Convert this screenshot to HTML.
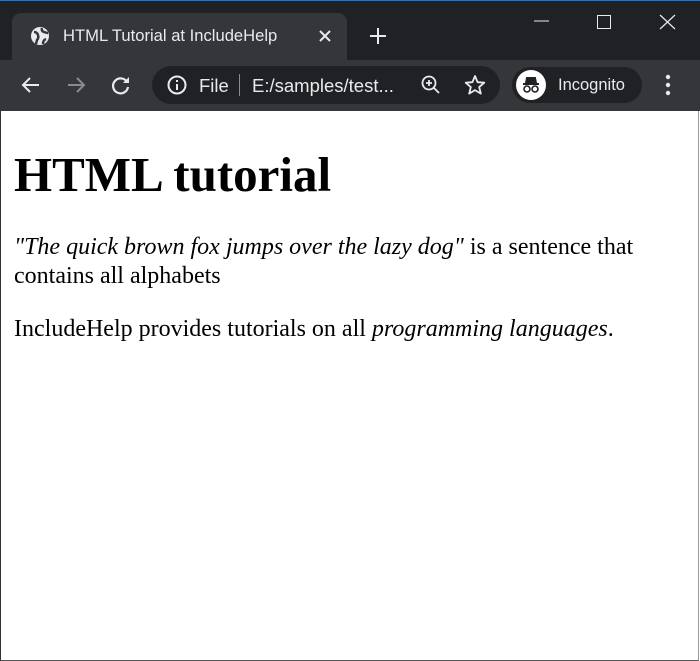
<!DOCTYPE html>
<html><head><style>
body{margin:0;width:700px;height:661px;overflow:hidden;background:#fff;font-family:"Liberation Sans",sans-serif;position:relative}
.top{position:absolute;left:0;top:0;width:700px;height:60px;background:#202124;border-top:1px solid #3a6fa8;box-sizing:border-box}
.tab{position:absolute;left:12px;top:13px;width:335px;height:48px;background:#35363a;border-radius:9px 9px 0 0}
.tb{position:absolute;left:0;top:60px;width:700px;height:51px;background:#35363a}
.omni{position:absolute;left:152px;top:66px;width:348px;height:38px;background:#202124;border-radius:19px}
.inc{position:absolute;left:512px;top:67px;width:130px;height:36px;background:#202124;border-radius:18px}
.t{position:absolute;color:#e8eaed;font-size:16px;white-space:nowrap}
.content{position:absolute;left:0;top:111px;width:699px;height:550px;border-left:1px solid #333;border-right:1px solid #999;border-bottom:1px solid #555;box-sizing:border-box;font-family:"Liberation Serif",serif;color:#000}
h1{position:absolute;left:13px;top:35px;margin:0;font-size:49px;font-weight:bold}
p{position:absolute;left:13px;margin:0;font-size:24px;line-height:29px;width:645px}
svg{position:absolute}
</style></head><body>
<div class="top"></div>
<div class="tab"></div>
<svg style="left:30px;top:26px" width="20" height="20" viewBox="0 0 20 20"><circle cx="10" cy="10" r="9" fill="#e8eaed"/><path d="M4 6q3 0 4 3t-1 5l-1 4M12 2q-1 3 2 4t4 1M13 18q0-4 3-5" stroke="#35363a" stroke-width="2.5" fill="none"/></svg>
<div class="t" style="left:63px;top:26px;font-size:16.6px">HTML Tutorial at IncludeHelp</div>
<svg style="left:318px;top:29px" width="14" height="14"><path d="M2 2L12 12M12 2L2 12" stroke="#e8eaed" stroke-width="2"/></svg>
<svg style="left:369px;top:27px" width="18" height="18"><path d="M9 1V17M1 9H17" stroke="#e8eaed" stroke-width="2"/></svg>
<svg style="left:532px;top:14px" width="150" height="16"><path d="M2 7H17" stroke="#e8eaed"/><rect x="65.5" y="1.5" width="13" height="13" fill="none" stroke="#e8eaed"/><path d="M128 1L143 15M143 1L128 15" stroke="#e8eaed" stroke-width="1.2"/></svg>
<div class="tb"></div>
<svg style="left:20px;top:75px" width="22" height="20"><path d="M19 10H3M10 3L3 10L10 17" stroke="#e8eaed" stroke-width="2" fill="none"/></svg>
<svg style="left:65px;top:75px" width="22" height="20"><path d="M3 10H19M12 3L19 10L12 17" stroke="#8a8b8e" stroke-width="2" fill="none"/></svg>
<svg style="left:110px;top:74px" width="22" height="22"><path d="M17 8A7.5 7.5 0 1 0 18 13" stroke="#e8eaed" stroke-width="2.2" fill="none"/><path d="M19 3V9H13Z" fill="#e8eaed"/></svg>
<div class="omni"></div>
<svg style="left:167px;top:75px" width="20" height="20"><circle cx="10" cy="10" r="8.5" stroke="#e8eaed" stroke-width="2" fill="none"/><path d="M10 9V15M10 5V7" stroke="#e8eaed" stroke-width="2"/></svg>
<div class="t" style="left:199px;top:75px;font-size:18.5px">File</div>
<div style="position:absolute;left:239px;top:74px;width:1px;height:22px;background:#8a8b8e"></div>
<div class="t" style="left:252px;top:75px;font-size:18.5px">E:/samples/test...</div>
<svg style="left:421px;top:75px" width="20" height="20"><circle cx="8" cy="8" r="6.5" stroke="#e8eaed" stroke-width="1.8" fill="none"/><path d="M12.5 12.5L18 18M8 5V11M5 8H11" stroke="#e8eaed" stroke-width="1.8"/></svg>
<svg style="left:464px;top:74px" width="22" height="22"><path d="M11 2L13.6 8.2 20.3 8.7 15.2 13.1 16.8 19.6 11 16.1 5.2 19.6 6.8 13.1 1.7 8.7 8.4 8.2Z" stroke="#e8eaed" stroke-width="1.8" fill="none" stroke-linejoin="round"/></svg>
<div class="inc"></div>
<svg style="left:516px;top:70px" width="30" height="30"><circle cx="15" cy="15" r="15" fill="#fff"/><path d="M10 13L11 8H19L20 13ZM7 14H23" stroke="#202124" stroke-width="2" fill="#202124"/><circle cx="11" cy="19" r="3" stroke="#202124" stroke-width="1.6" fill="none"/><circle cx="19" cy="19" r="3" stroke="#202124" stroke-width="1.6" fill="none"/></svg>
<div class="t" style="left:558px;top:76px;font-size:16.5px">Incognito</div>
<svg style="left:664px;top:74px" width="8" height="22"><circle cx="4" cy="3" r="2.2" fill="#e8eaed"/><circle cx="4" cy="11" r="2.2" fill="#e8eaed"/><circle cx="4" cy="19" r="2.2" fill="#e8eaed"/></svg>
<div class="content">
<h1>HTML tutorial</h1>
<p style="top:122px"><i>"The quick brown fox jumps over the lazy dog"</i> is a sentence that contains all alphabets</p>
<p style="top:204px">IncludeHelp provides tutorials on all <i>programming languages</i>.</p>
</div>
</body></html>
